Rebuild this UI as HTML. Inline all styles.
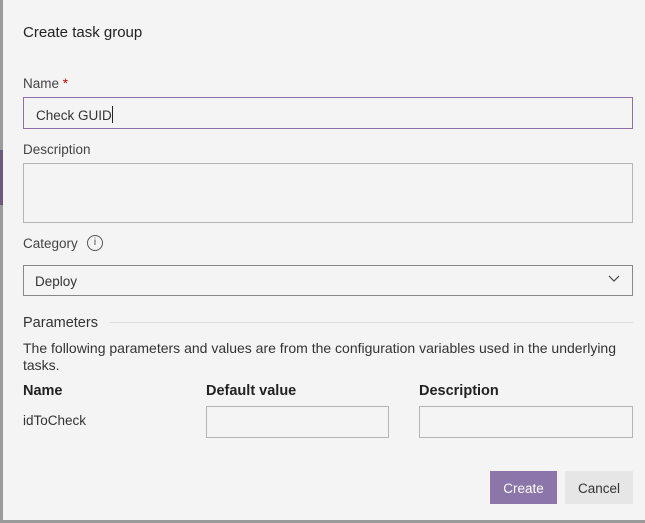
<!DOCTYPE html>
<html><head><meta charset="utf-8"><style>
body{margin:0;width:645px;height:523px;background:#9a9a9a;position:relative;overflow:hidden;font-family:"Segoe UI","Liberation Sans",sans-serif;color:#333;}
.dlg{position:absolute;left:3px;top:0;width:642px;height:520px;background:#f4f4f4;}
.a{position:absolute;font-size:13.5px;white-space:nowrap;}
.box{position:absolute;border:1px solid #b4b4b4;background:#f4f4f4;box-sizing:border-box;}
.b{font-weight:bold;font-size:14.5px;color:#222;}
</style></head><body>
<div style="position:absolute;left:0;top:150px;width:3px;height:55px;background:#6b5b7b"></div>
<div class="dlg">
<div class="a" style="left:20px;top:24px;font-size:15px;color:#222">Create task group</div>
<div class="a" style="left:20px;top:76px;color:#444">Name <span style="color:#c00">*</span></div>
<div class="box" style="left:20px;top:97px;width:610px;height:32px;border-color:#8a6fa8"></div>
<div class="a" style="left:33px;top:106px;color:#333">Check GUID<span style="display:inline-block;width:1px;height:17px;background:#222;vertical-align:-3px"></span></div>
<div class="a" style="left:20px;top:142px;color:#444">Description</div>
<div class="box" style="left:20px;top:163px;width:610px;height:60px"></div>
<div class="a" style="left:20px;top:236px;color:#444">Category</div>
<div style="position:absolute;left:84px;top:235px;width:14px;height:14px;border:1px solid #555;border-radius:50%;font-size:10px;text-align:center;line-height:14px;color:#444">i</div>
<div class="box" style="left:20px;top:265px;width:610px;height:31px;border-color:#888"></div>
<div class="a" style="left:32px;top:274px;color:#333">Deploy</div>
<svg style="position:absolute;left:605px;top:275px" width="12" height="8"><path d="M1 1 L6 6 L11 1" stroke="#444" fill="none" stroke-width="1.2"/></svg>
<div class="a" style="left:20px;top:315px;font-size:14.5px;color:#333">Parameters</div>
<div style="position:absolute;left:106px;top:322px;width:524px;height:1px;background:#ddd"></div>
<div class="a" style="left:20px;top:340px;font-size:14px;color:#333">The following parameters and values are from the configuration variables used in the underlying</div>
<div class="a" style="left:20px;top:357px;font-size:14px;color:#333">tasks.</div>
<div class="a b" style="left:20px;top:383px">Name</div>
<div class="a b" style="left:203px;top:383px">Default value</div>
<div class="a b" style="left:416px;top:383px">Description</div>
<div class="a" style="left:20px;top:413px;color:#333">idToCheck</div>
<div class="box" style="left:203px;top:406px;width:183px;height:32px"></div>
<div class="box" style="left:416px;top:406px;width:214px;height:32px"></div>
<div style="position:absolute;left:487px;top:471px;width:67px;height:33px;background:#8c75a8;color:#fff;font-size:13.5px;text-align:center;line-height:35px">Create</div>
<div style="position:absolute;left:562px;top:471px;width:68px;height:33px;background:#e6e6e6;color:#333;font-size:13.5px;text-align:center;line-height:35px">Cancel</div>
</div>
</body></html>
